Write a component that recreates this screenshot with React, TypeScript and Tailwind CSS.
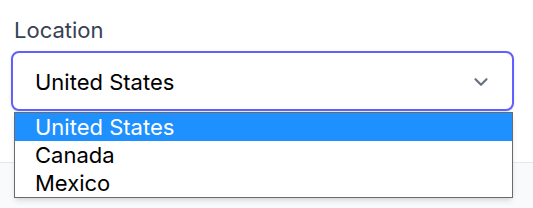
import { ChevronDown } from "lucide-react"

export default function App() {
  const options = ["United States", "Canada", "Mexico"]

  return (
    <div className="relative h-[208px] w-[533px] overflow-hidden bg-gray-50 font-['Inter',sans-serif]">
      <div className="h-[163px] border-b border-gray-200 bg-white px-[11px] pt-[15px]">
        <label className="block pl-[3px] text-[22px] leading-[30px] text-gray-700">Location</label>
        <div className="mt-[6px] flex h-[60px] w-[503px] items-center justify-between rounded-[8px] border-2 border-indigo-500 bg-white pl-[22px] pr-[20px] pt-[2px] shadow-sm">
          <span className="text-[22px] text-black">United States</span>
          <ChevronDown className="h-[22px] w-[22px] text-gray-500" strokeWidth={2.4} />
        </div>
      </div>

      <ul className="absolute left-[14px] top-[112px] w-[499px] border border-[#6b6b6b] bg-white shadow-md">
        {options.map((opt, i) => (
          <li
            key={opt}
            className={
              i === 0
                ? "h-[28px] bg-[#1e90ff] pl-[20px] text-[22px] leading-[28px] text-white"
                : "h-[28px] pl-[20px] text-[22px] leading-[28px] text-black"
            }
          >
            {opt}
          </li>
        ))}
      </ul>
    </div>
  )
}
